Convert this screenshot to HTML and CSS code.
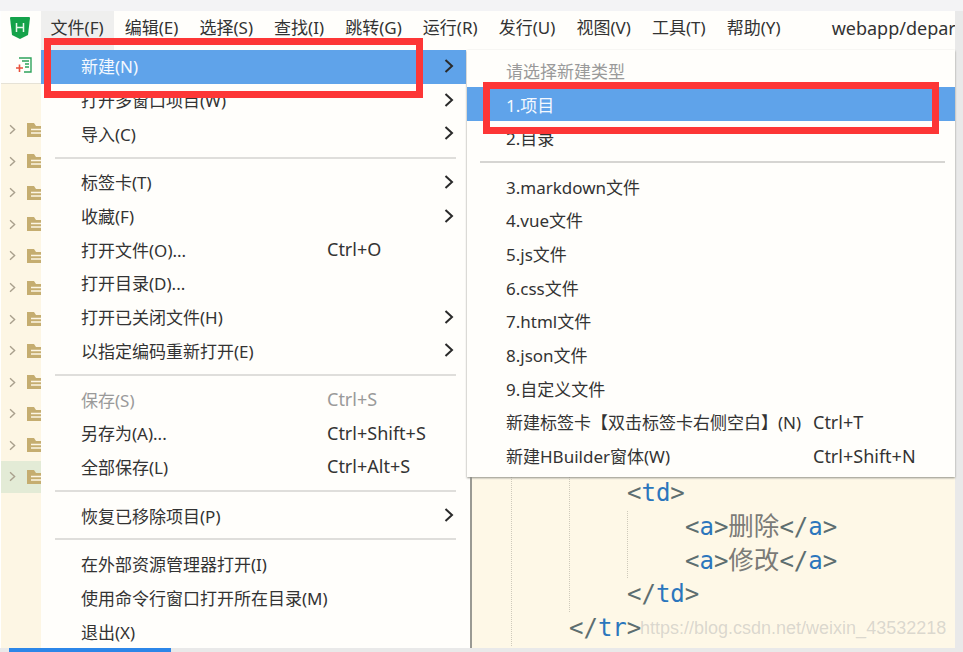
FILE: index.html
```html
<!DOCTYPE html>
<html lang="zh-CN">
<head>
<meta charset="utf-8">
<title>HBuilderX</title>
<link rel="stylesheet" href="styles.css">
</head>
<body>
<svg class="defs" width="0" height="0" aria-hidden="true">
  <symbol id="chev" viewBox="0 0 10 14"><path d="M1.5 1 L8 7 L1.5 13" fill="none" stroke="currentColor" stroke-width="2"/></symbol>
  <symbol id="folder" viewBox="0 0 15 14"><path d="M0 0H7L9 3H15V14H0Z" fill="#c5ad70"/><path d="M4 6.5H15M4 10H15" stroke="#fdf6e4" stroke-width="1.4"/></symbol>
</svg>
<div class="app">
  <div class="topstrip"></div>
  <div class="window">
    <div class="menubar">
      <div class="logo-cell">
        <svg class="logo" viewBox="0 0 20 22"><path d="M0 1Q0 0 1 0H19Q20 0 20 1L18 18L10 22L2 18Z" fill="#14a24a"/><path d="M6.5 6V15M13.5 6V15M6.5 10.5H13.5" stroke="#e8f8ec" stroke-width="1.5" fill="none"/></svg>
      </div>
      <span class="mb-item active">文件(F)</span>
      <span class="mb-item">编辑(E)</span>
      <span class="mb-item">选择(S)</span>
      <span class="mb-item">查找(I)</span>
      <span class="mb-item">跳转(G)</span>
      <span class="mb-item">运行(R)</span>
      <span class="mb-item">发行(U)</span>
      <span class="mb-item">视图(V)</span>
      <span class="mb-item">工具(T)</span>
      <span class="mb-item">帮助(Y)</span>
      <span class="mb-title">webapp/depar</span>
    </div>
    <div class="workspace">
      <div class="sidebar">
        <div class="toolbar">
          <svg class="newfile" viewBox="0 0 17 17"><path d="M4 1H16V15H9" fill="none" stroke="#2fa35c" stroke-width="1.4"/><path d="M7 4H14M10 7H14M10 10H14" stroke="#2fa35c" stroke-width="1.4"/><path d="M1 11H8M4.5 7.5V15" stroke="#e8503c" stroke-width="1.6"/></svg>
        </div>
        <div class="tree">
          <div class="tree-row"><svg class="tchev"><use href="#chev"/></svg><svg class="tfolder"><use href="#folder"/></svg></div>
          <div class="tree-row"><svg class="tchev"><use href="#chev"/></svg><svg class="tfolder"><use href="#folder"/></svg></div>
          <div class="tree-row"><svg class="tchev"><use href="#chev"/></svg><svg class="tfolder"><use href="#folder"/></svg></div>
          <div class="tree-row"><svg class="tchev"><use href="#chev"/></svg><svg class="tfolder"><use href="#folder"/></svg></div>
          <div class="tree-row"><svg class="tchev"><use href="#chev"/></svg><svg class="tfolder"><use href="#folder"/></svg></div>
          <div class="tree-row"><svg class="tchev"><use href="#chev"/></svg><svg class="tfolder"><use href="#folder"/></svg></div>
          <div class="tree-row"><svg class="tchev"><use href="#chev"/></svg><svg class="tfolder"><use href="#folder"/></svg></div>
          <div class="tree-row"><svg class="tchev"><use href="#chev"/></svg><svg class="tfolder"><use href="#folder"/></svg></div>
          <div class="tree-row"><svg class="tchev"><use href="#chev"/></svg><svg class="tfolder"><use href="#folder"/></svg></div>
          <div class="tree-row"><svg class="tchev"><use href="#chev"/></svg><svg class="tfolder"><use href="#folder"/></svg></div>
          <div class="tree-row"><svg class="tchev"><use href="#chev"/></svg><svg class="tfolder"><use href="#folder"/></svg></div>
          <div class="tree-row selected"><svg class="tchev"><use href="#chev"/></svg><svg class="tfolder"><use href="#folder"/></svg></div>
        </div>
      </div>
      <div class="menu-gap"></div>
      <div class="editor">
        <div class="guide">
          <div class="guide">
            <div class="line"><i>&lt;</i><b>td</b><i>&gt;</i></div>
            <div class="guide">
              <div class="line"><i>&lt;</i><b>a</b><i>&gt;</i><span class="cjk">删除</span><i>&lt;/</i><b>a</b><i>&gt;</i></div>
              <div class="line"><i>&lt;</i><b>a</b><i>&gt;</i><span class="cjk">修改</span><i>&lt;/</i><b>a</b><i>&gt;</i></div>
            </div>
            <div class="line"><i>&lt;/</i><b>td</b><i>&gt;</i></div>
          </div>
          <div class="line"><i>&lt;/</i><b>tr</b><i>&gt;</i></div>
        </div>
      </div>
    </div>
  </div>
  <div class="statusbar"><div class="progress"></div></div>
</div>

<div class="menu main-menu">
  <div class="row hl"><span>新建(N)</span><span></span><svg class="arrow"><use href="#chev"/></svg></div>
  <div class="row"><span>打开多窗口项目(W)</span><span></span><svg class="arrow"><use href="#chev"/></svg></div>
  <div class="row"><span>导入(C)</span><span></span><svg class="arrow"><use href="#chev"/></svg></div>
  <div class="sep"></div>
  <div class="row"><span>标签卡(T)</span><span></span><svg class="arrow"><use href="#chev"/></svg></div>
  <div class="row"><span>收藏(F)</span><span></span><svg class="arrow"><use href="#chev"/></svg></div>
  <div class="row"><span>打开文件(O)...</span><span class="key">Ctrl+O</span></div>
  <div class="row"><span>打开目录(D)...</span></div>
  <div class="row"><span>打开已关闭文件(H)</span><span></span><svg class="arrow"><use href="#chev"/></svg></div>
  <div class="row"><span>以指定编码重新打开(E)</span><span></span><svg class="arrow"><use href="#chev"/></svg></div>
  <div class="sep"></div>
  <div class="row muted"><span>保存(S)</span><span class="key">Ctrl+S</span></div>
  <div class="row"><span>另存为(A)...</span><span class="key">Ctrl+Shift+S</span></div>
  <div class="row"><span>全部保存(L)</span><span class="key">Ctrl+Alt+S</span></div>
  <div class="sep"></div>
  <div class="row"><span>恢复已移除项目(P)</span><span></span><svg class="arrow"><use href="#chev"/></svg></div>
  <div class="sep"></div>
  <div class="row"><span>在外部资源管理器打开(I)</span></div>
  <div class="row"><span>使用命令行窗口打开所在目录(M)</span></div>
  <div class="row"><span>退出(X)</span></div>
</div>

<div class="menu sub-menu">
  <div class="row muted"><span>请选择新建类型</span></div>
  <div class="row hl"><span>1.项目</span></div>
  <div class="row"><span>2.目录</span></div>
  <div class="sep"></div>
  <div class="row"><span>3.markdown文件</span></div>
  <div class="row"><span>4.vue文件</span></div>
  <div class="row"><span>5.js文件</span></div>
  <div class="row"><span>6.css文件</span></div>
  <div class="row"><span>7.html文件</span></div>
  <div class="row"><span>8.json文件</span></div>
  <div class="row"><span>9.自定义文件</span></div>
  <div class="row"><span>新建标签卡【双击标签卡右侧空白】(N)</span><span class="key">Ctrl+T</span></div>
  <div class="row"><span>新建HBuilder窗体(W)</span><span class="key">Ctrl+Shift+N</span></div>
</div>

<div class="callout callout-menu"></div>
<div class="callout callout-sub"></div>
<div class="watermark">https://blog.csdn.net/weixin_43532218</div>
</body>
</html>
```
FILE: styles.css
```css
html, body { margin: 0; padding: 0; }
body {
  width: 963px;
  height: 652px;
  overflow: hidden;
  position: relative;
  background: #fff;
  color: #333;
  font-family: "Noto Sans", "Noto Sans CJK SC", sans-serif;
  font-size: 17px;
}
.defs { position: absolute; }
.app { display: flex; flex-direction: column; height: 652px; background: #e9e9e9; }
.topstrip { height: 11px; background: #f3f3f5; flex: none; }
.window { flex: 1; min-height: 0; display: flex; flex-direction: column; border-left: 1px solid #fff; margin-right: 8px; }
.menubar { height: 39px; flex: none; display: flex; align-items: center; background: #fffefb; overflow: hidden; white-space: nowrap; }
.logo-cell { width: 39.6px; flex: none; display: flex; padding-left: 9px; box-sizing: border-box; }
.logo { width: 20px; height: 22px; margin-bottom: 5px; }
.mb-item { height: 39px; line-height: 34px; padding: 0 10px; margin-right: 1.1px; flex: none; }
.mb-item.active { background: #efefee; }
.mb-title { height: 39px; line-height: 34px; margin-left: 40px; font-size: 18px; }
.workspace { flex: 1; min-height: 0; display: flex; background: #fffefb; }
.sidebar { width: 40px; flex: none; background: #fdf6e4; }
.toolbar { height: 33px; background: #fffefb; border-bottom: 1px solid #e6e2d6; display: flex; align-items: center; padding-left: 14px; }
.newfile { width: 17px; height: 17px; margin-top: -2px; }
.tree { padding-top: 30px; }
.tree-row { height: 31.55px; display: flex; align-items: center; padding-left: 8px; gap: 11px; overflow: hidden; }
.tree-row.selected { background: #e3ebd6; }
.tchev { width: 7px; height: 11px; color: #a9a08d; flex: none; }
.tfolder { width: 15px; height: 14px; flex: none; }
.menu-gap { width: 429px; flex: none; }
.editor {
  flex: 1;
  min-width: 0;
  background: #fef8e7;
  border-left: 2px solid #9a9a94;
  padding-left: 39px;
  padding-top: 427.4px;
  font-family: "DejaVu Sans Mono", monospace;
  font-size: 24px;
  overflow: hidden;
}
.guide { border-left: 1px dotted #cfcabb; padding-left: 57px; }
.line { height: 33.7px; line-height: 33.7px; white-space: nowrap; color: #5d6e70; }
.line i { font-style: normal; }
.line b { font-weight: 400; color: #2b76bd; }
.line .cjk { font-family: "Noto Sans CJK SC", sans-serif; font-size: 25.5px; line-height: 1px; color: #7b7b77; }
.statusbar { height: 4px; flex: none; background: #e9e9e9; padding-left: 9px; }
.progress { width: 162px; height: 4px; background: #2c86e8; }

.menu { position: absolute; background: #fffefb; white-space: nowrap; box-sizing: border-box; }
.row { height: 33.7px; display: grid; align-items: center; }
.row.hl { background: #5fa3ea; color: #f4f9ff; }
.row.muted { color: #9a9a9a; }
.key { font-size: 18px; }
.sep { height: 2px; background: #dfdedb; }
.arrow { width: 10px; height: 14px; color: #2a2a2a; }

.main-menu { left: 41px; top: 50px; width: 425px; height: 598px; }
.main-menu .row { box-sizing: border-box; padding: 0 12px 2px 40px; grid-template-columns: 246px 1fr 10px; }
.main-menu .sep { margin: 5.5px 10px 7.5px 14px; }

.sub-menu { left: 467px; top: 50px; width: 488px; height: 427px; padding-top: 3.6px; box-shadow: 0 1px 2px #8f8f88; }
.sub-menu .row { padding-left: 39px; grid-template-columns: 307px 1fr; }
.sub-menu .sep { height: 1.5px; margin: 6.5px 10px 6.5px 13px; background: #d6d5d2; }

.callout { position: absolute; box-sizing: border-box; border: 7px solid #fd3636; }
.callout-menu { left: 44px; top: 38px; width: 379px; height: 60px; }
.callout-sub { left: 483px; top: 82px; width: 456px; height: 52px; }
.watermark {
  position: absolute;
  left: 640px;
  top: 618px;
  font-family: "Liberation Sans", sans-serif;
  font-size: 18px;
  color: rgba(175, 175, 175, 0.45);
}
```
